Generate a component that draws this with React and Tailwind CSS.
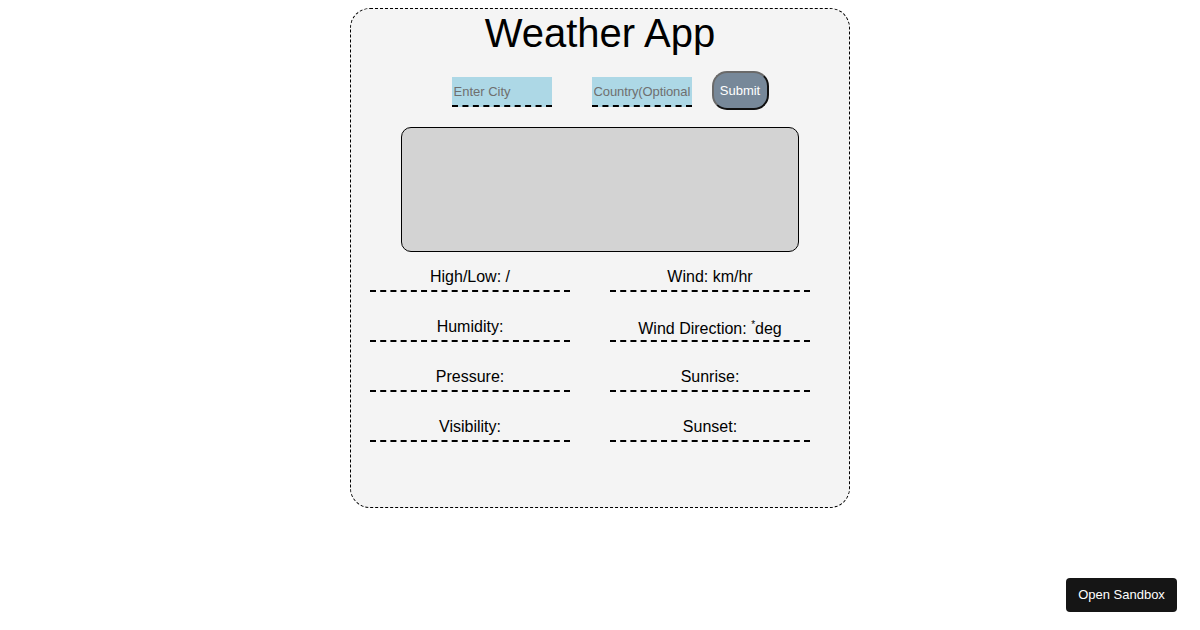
import React, { useState } from 'react';

const stats = [
  ['High/Low: /', 'Wind: km/hr'],
  ['Humidity:', 'wind-dir'],
  ['Pressure:', 'Sunrise:'],
  ['Visibility:', 'Sunset:'],
];

function Stat({ label }) {
  if (label === 'wind-dir') {
    return (
      <div className="h-[25px] border-b-2 border-dashed border-black text-center text-[16px] leading-[18px] pt-[3px]">
        Wind Direction: <span className="relative top-[-6px] text-[10px] leading-none text-black">*</span>deg
      </div>
    );
  }
  return (
    <div className="h-[25px] border-b-2 border-dashed border-black text-center text-[16px] leading-[18px] pt-[1px]">
      {label}
    </div>
  );
}

export default function App() {
  const [city, setCity] = useState('');
  const [country, setCountry] = useState('');

  return (
    <div className="min-h-[630px] bg-white pt-2 font-['Liberation_Sans',Arial,sans-serif] text-black">
      <div className="mx-auto w-[500px] h-[500px] border border-dashed border-black rounded-[20px] bg-[#f4f4f4]">
        <h1 className="text-center text-[40px] leading-[49px] font-normal">Weather App</h1>

        <div className="mt-[13px] flex justify-center items-start">
          <input
            value={city}
            onChange={(e) => setCity(e.target.value)}
            placeholder="Enter City"
            className="mx-5 mt-[6px] w-[100px] h-[30px] bg-[#add8e6] border-b-2 border-dashed border-black px-[2px] text-[13px] outline-none placeholder:text-[#6f6f6f]"
          />
          <input
            value={country}
            onChange={(e) => setCountry(e.target.value)}
            placeholder="Country(Optional)"
            className="mx-5 mt-[6px] w-[100px] h-[30px] bg-[#add8e6] border-b-2 border-dashed border-black px-[2px] text-[13px] tracking-[-0.1px] outline-none placeholder:text-[#6f6f6f]"
          />
          <button className="w-[57px] h-[39px] rounded-[15px] bg-[#778899] text-white text-[13px] border-2 border-t-[#6a6a6a] border-l-[#6a6a6a] border-b-[#111] border-r-[#111]">
            Submit
          </button>
        </div>

        <div className="mt-[17px] mx-auto w-[398px] h-[125px] bg-[#d3d3d3] border border-black rounded-[10px]" />

        <div className="mt-[15px] ml-[19px] grid grid-cols-[200px_200px] gap-x-10 gap-y-[25px]">
          {stats.map(([a, b]) => (
            <React.Fragment key={a}>
              <Stat label={a} />
              <Stat label={b} />
            </React.Fragment>
          ))}
        </div>
      </div>

      <button className="fixed bottom-[18px] right-[23px] w-[111px] h-[34px] rounded-[4px] bg-[#151515] text-white text-[13px]">
        Open Sandbox
      </button>
    </div>
  );
}
